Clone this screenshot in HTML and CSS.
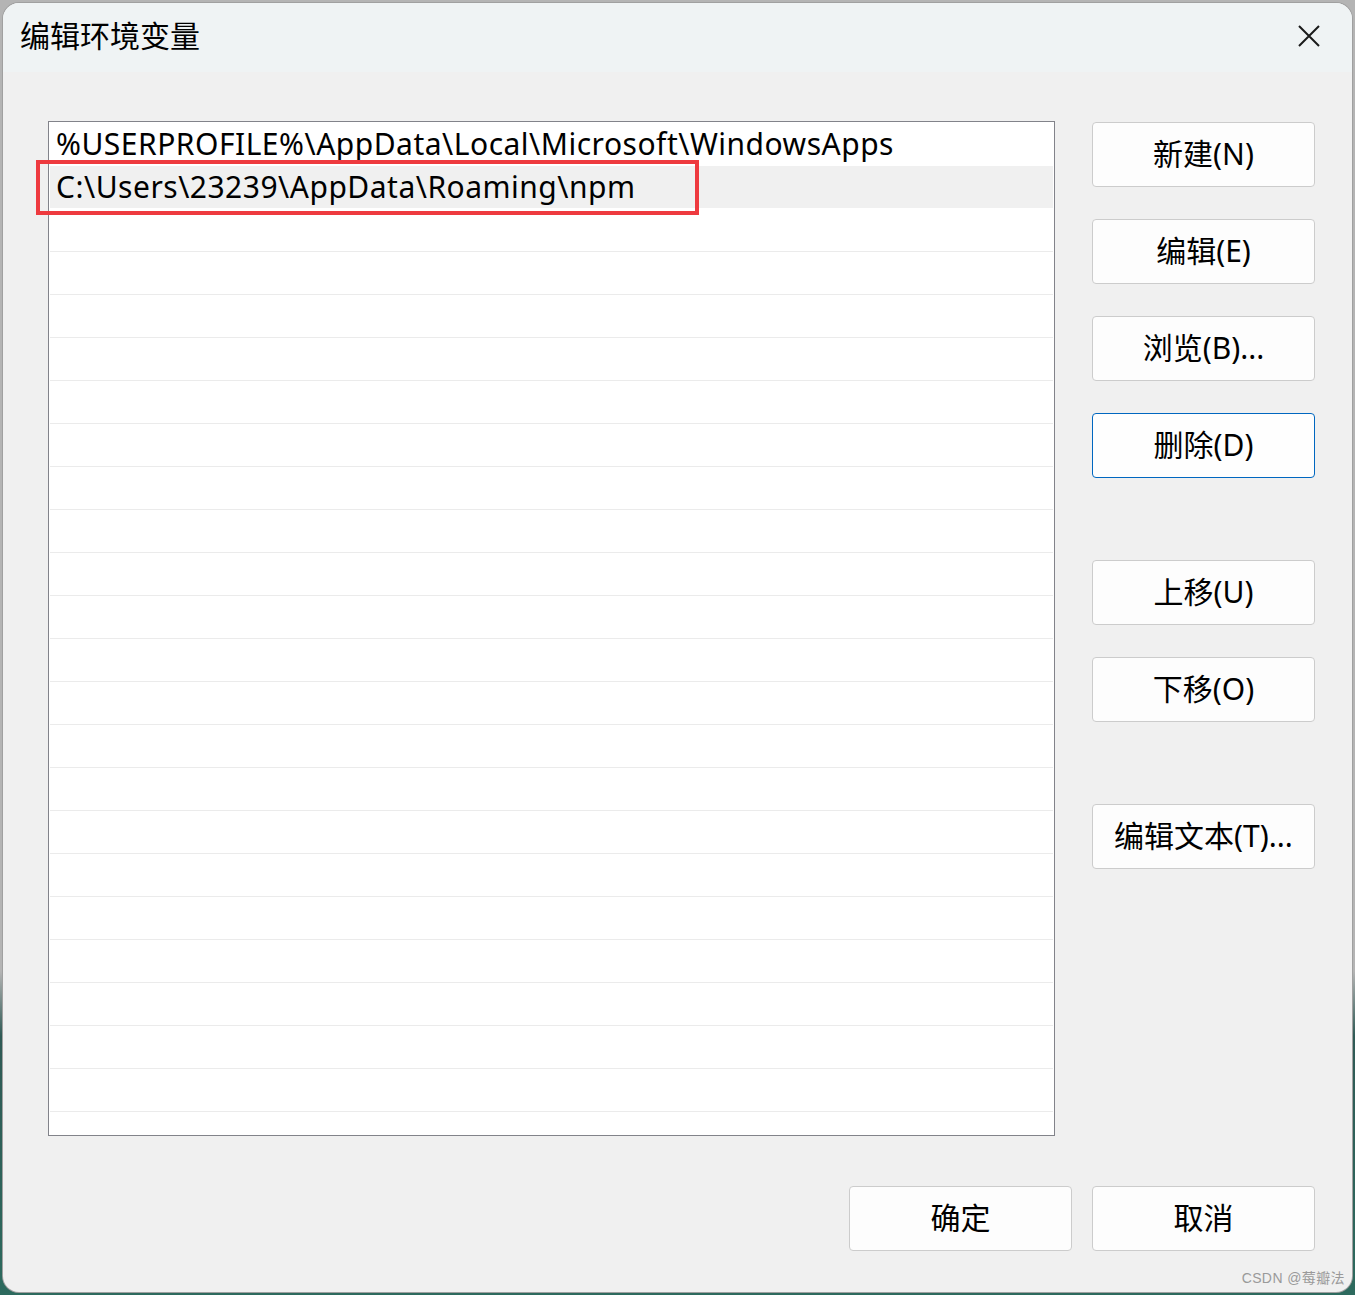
FILE: index.html
```html
<!DOCTYPE html>
<html lang="zh-CN">
<head>
<meta charset="utf-8">
<title>编辑环境变量</title>
<link rel="stylesheet" href="styles.css">
</head>
<body>
<div class="dialog">
  <div class="titlebar">
    <span class="title">编辑环境变量</span>
    <svg class="close" width="22" height="22" viewBox="0 0 22 22"><path d="M1 1 L21 21 M21 1 L1 21" stroke="#1a1a1a" stroke-width="2" fill="none"/></svg>
  </div>
  <div class="body">
    <div class="main">
      <div class="listwrap">
        <div class="list">
          <div class="row">%USERPROFILE%\AppData\Local\Microsoft\WindowsApps</div>
          <div class="row selected">C:\Users\23239\AppData\Roaming\npm</div>
          <div class="row"></div><div class="row"></div><div class="row"></div><div class="row"></div>
          <div class="row"></div><div class="row"></div><div class="row"></div><div class="row"></div>
          <div class="row"></div><div class="row"></div><div class="row"></div><div class="row"></div>
          <div class="row"></div><div class="row"></div><div class="row"></div><div class="row"></div>
          <div class="row"></div><div class="row"></div><div class="row"></div><div class="row"></div>
          <div class="row"></div>
        </div>
        <div class="highlight"></div>
      </div>
      <div class="side">
        <div class="group">
          <button class="btn">新建(N)</button>
          <button class="btn">编辑(E)</button>
          <button class="btn">浏览(B)...</button>
          <button class="btn focus">删除(D)</button>
        </div>
        <div class="group">
          <button class="btn">上移(U)</button>
          <button class="btn">下移(O)</button>
        </div>
        <div class="group">
          <button class="btn">编辑文本(T)...</button>
        </div>
      </div>
    </div>
    <div class="footer">
      <button class="btn">确定</button>
      <button class="btn">取消</button>
    </div>
  </div>
  <div class="watermark">CSDN @莓瓣法</div>
</div>
</body>
</html>
```
FILE: styles.css
```css
html, body {
  margin: 0;
  padding: 0;
}
body {
  width: 1355px;
  height: 1295px;
  background: linear-gradient(180deg, #b4b4b4 0%, #b4b4b4 75%, #2f5a55 80%, #2d6a5e 100%);
  padding: 3px;
  box-sizing: border-box;
  font-family: "Noto Sans", "Noto Sans CJK SC", sans-serif;
  color: #000;
  overflow: hidden;
}
.dialog {
  position: relative;
  width: 1349px;
  height: 1289px;
  background: #f0f0f0;
  border-radius: 16px;
  box-shadow: 0 0 0 1px #a0a0a0;
  overflow: hidden;
  display: flex;
  flex-direction: column;
}
.titlebar {
  height: 69px;
  flex: none;
  background: #eff3f4;
  display: flex;
  align-items: center;
  justify-content: space-between;
  padding: 0 32px 0 17px;
  box-sizing: border-box;
}
.title {
  font-family: "Noto Sans CJK SC", sans-serif;
  font-size: 30px;
  line-height: 1;
  margin-top: -8px;
}
.close {
  margin-top: -4px;
}
.body {
  flex: 1;
  display: flex;
  flex-direction: column;
  padding: 49px 37px 41px 45px;
  box-sizing: border-box;
}
.main {
  display: flex;
  gap: 37px;
}
.listwrap {
  position: relative;
}
.list {
  width: 1007px;
  height: 1015px;
  box-sizing: border-box;
  border: 1px solid #82838a;
  background: #fff;
  padding: 1px 1px 0 1px;
  overflow: hidden;
}
.row {
  height: 42px;
  border-bottom: 1px solid #ebebeb;
  font-size: 30px;
  line-height: 42px;
  padding-left: 6px;
  white-space: nowrap;
  font-family: "Noto Sans", "Noto Sans CJK SC", sans-serif;
  letter-spacing: 0.5px;
}
.row:first-child {
  border-bottom-color: #fff;
}
.row.selected {
  background: #f0f0f0;
  border-bottom-color: #fff;
}
.highlight {
  position: absolute;
  left: -12px;
  top: 39px;
  width: 655px;
  height: 47px;
  border: 4px solid #ee3a3f;
}
.side {
  width: 223px;
  display: flex;
  flex-direction: column;
  gap: 82px;
  padding-top: 1px;
}
.group {
  display: flex;
  flex-direction: column;
  gap: 32px;
}
.btn {
  width: 223px;
  height: 65px;
  box-sizing: border-box;
  background: #fdfdfd;
  border: 1px solid #cccccc;
  border-radius: 4px;
  font-family: "Noto Sans", "Noto Sans CJK SC", sans-serif;
  font-size: 30px;
  line-height: 1;
  color: #000;
  padding: 0 0 1px 0;
  margin: 0;
}
.btn.focus {
  border: 1.5px solid #0067c0;
  background: #fefefe;
}
.footer {
  margin-top: auto;
  display: flex;
  justify-content: flex-end;
  gap: 20px;
}
.watermark {
  position: absolute;
  right: 7px;
  bottom: 5px;
  font-family: "Liberation Sans", "Noto Sans CJK SC", sans-serif;
  font-size: 14px;
  letter-spacing: 0.4px;
  color: #9a9a9a;
}
```
